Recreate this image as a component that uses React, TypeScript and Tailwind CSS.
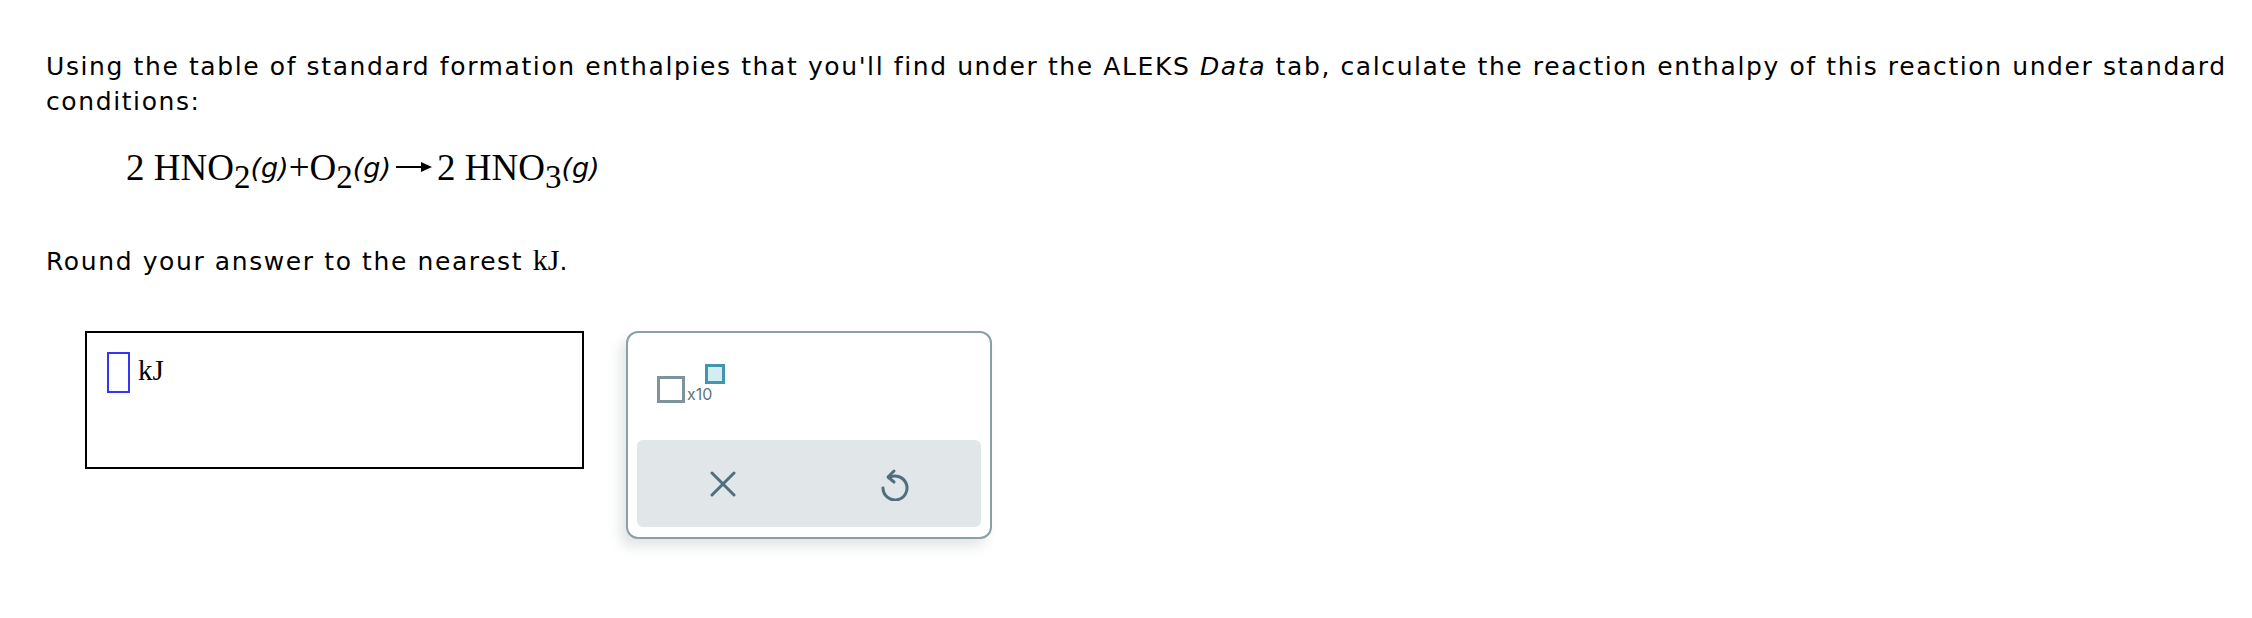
import React from 'react';

// ALEKS-style question with answer box and keypad

const sans = "font-['DejaVu_Sans','Verdana',sans-serif]";
const serif = "font-['Liberation_Serif','Times_New_Roman',serif]";

function Gas() {
  return <span className={`${sans} italic text-[27px]`}>(g)</span>;
}

function Sub({ n }: { n: string }) {
  return <span className="relative top-[10px] text-[33px] leading-none">{n}</span>;
}

function Arrow() {
  return (
    <svg width="38" height="14" viewBox="0 0 38 14" className="mx-[4px] inline-block">
      <line x1="1" y1="7" x2="28" y2="7" stroke="#000" strokeWidth="2" />
      <polygon points="26,2 37,7 26,12" fill="#000" />
    </svg>
  );
}

function UndoIcon() {
  return (
    <svg width="32" height="34" viewBox="0 0 32 34" fill="none" stroke="#4f6f7c" strokeWidth="3"
      strokeLinecap="round" strokeLinejoin="round">
      <path d="M4 21 A12 12 0 1 0 10 10.6" />
      <path d="M15 4 L9 10 L15 15" />
    </svg>
  );
}

function XIcon() {
  return (
    <svg width="26" height="26" viewBox="0 0 26 26" fill="none" stroke="#4f6f7c" strokeWidth="3"
      strokeLinecap="round">
      <path d="M2 2 L24 24 M24 2 L2 24" />
    </svg>
  );
}

export default function App() {
  return (
    <div className="min-h-[618px] w-[2252px] bg-white pl-[46px] pt-[49px] text-black">
      <p className={`${sans} w-[2200px] text-[25px] leading-[35px] tracking-[1.6px]`}>
        Using the table of standard formation enthalpies that you'll find under the ALEKS{' '}
        <i>Data</i> tab, calculate the reaction enthalpy of this reaction under standard
        conditions:
      </p>

      <div className={`${serif} ml-[80px] mt-[23px] flex h-[50px] items-center text-[37px] leading-none`}>
        <span>2&nbsp;HNO</span>
        <Sub n="2" />
        <Gas />
        <span>+</span>
        <span>O</span>
        <Sub n="2" />
        <Gas />
        <Arrow />
        <span>2&nbsp;HNO</span>
        <Sub n="3" />
        <Gas />
      </div>

      <p className={`${sans} mt-[50px] text-[25px] leading-[35px] tracking-[1.6px]`}>
        Round your answer to the nearest <span className={`${serif} text-[30px] tracking-normal`}>kJ</span>.
      </p>

      <div className="mt-[52px] flex items-start gap-[42px] pl-[39px]">
        <div className="flex h-[138px] w-[499px] items-start gap-[8px] border-2 border-black pl-[20px] pt-[19px]">
          <div className="h-[41px] w-[23px] border-2 border-[#3535f5]" />
          <span className={`${serif} mt-[4px] text-[29px] leading-none`}>kJ</span>
        </div>

        <div className="flex h-[208px] w-[366px] flex-col rounded-[12px] border-2 border-[#8c9ea6] bg-white px-[9px] pb-[10px] shadow-[-6px_8px_12px_rgba(60,80,90,0.14)]">
          <div className="flex h-[107px] shrink-0 items-start pl-[20px] pt-[31px]">
            <div className="mt-[12px] h-[27px] w-[28px] border-[3px] border-[#7e939c]" />
            <span className="mt-[22px] ml-[2px] font-['Inter',sans-serif] text-[16px] leading-none text-[#5e737d]">x10</span>
            <div className="-ml-[7px] h-[20px] w-[20px] border-[3px] border-[#4196ad] bg-[#d4edf3]" />
          </div>
          <div className="grid flex-1 grid-cols-2 rounded-[6px] bg-[#e1e6e9]">
            <div className="flex items-center justify-center">
              <XIcon />
            </div>
            <div className="flex items-center justify-center">
              <UndoIcon />
            </div>
          </div>
        </div>
      </div>
    </div>
  );
}
